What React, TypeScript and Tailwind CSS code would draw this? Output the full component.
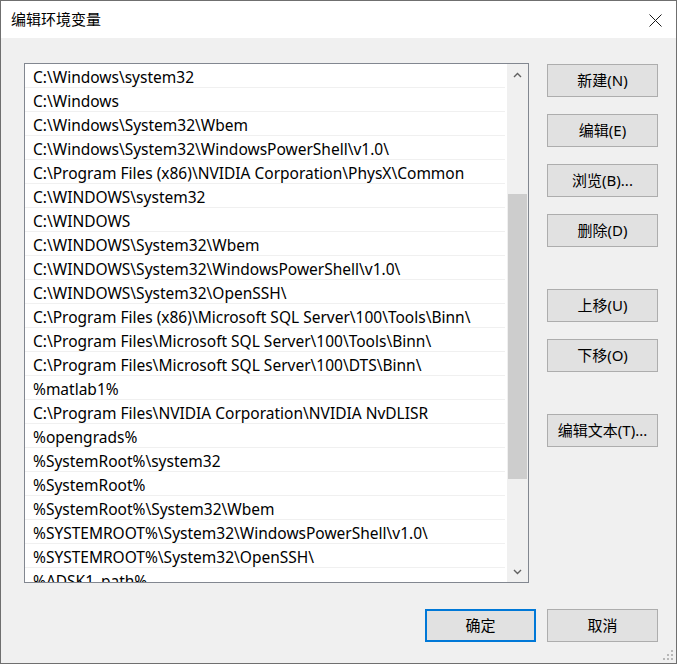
import React from 'react';

const paths = [
  'C:\\Windows\\system32',
  'C:\\Windows',
  'C:\\Windows\\System32\\Wbem',
  'C:\\Windows\\System32\\WindowsPowerShell\\v1.0\\',
  'C:\\Program Files (x86)\\NVIDIA Corporation\\PhysX\\Common',
  'C:\\WINDOWS\\system32',
  'C:\\WINDOWS',
  'C:\\WINDOWS\\System32\\Wbem',
  'C:\\WINDOWS\\System32\\WindowsPowerShell\\v1.0\\',
  'C:\\WINDOWS\\System32\\OpenSSH\\',
  'C:\\Program Files (x86)\\Microsoft SQL Server\\100\\Tools\\Binn\\',
  'C:\\Program Files\\Microsoft SQL Server\\100\\Tools\\Binn\\',
  'C:\\Program Files\\Microsoft SQL Server\\100\\DTS\\Binn\\',
  '%matlab1%',
  'C:\\Program Files\\NVIDIA Corporation\\NVIDIA NvDLISR',
  '%opengrads%',
  '%SystemRoot%\\system32',
  '%SystemRoot%',
  '%SystemRoot%\\System32\\Wbem',
  '%SYSTEMROOT%\\System32\\WindowsPowerShell\\v1.0\\',
  '%SYSTEMROOT%\\System32\\OpenSSH\\',
  '%ADSK1_path%',
];

const font = { fontFamily: '"Noto Sans", "Noto Sans CJK SC", sans-serif' };

function WinButton({ label, primary = false }: { label: string; primary?: boolean }) {
  return (
    <button
      className={
        'w-[111px] h-[33px] flex items-center justify-center bg-[#e1e1e1] text-[15px] text-black ' +
        (primary ? 'border-2 border-[#0078d7]' : 'border border-[#adadad]')
      }
    >
      {label}
    </button>
  );
}

export default function App() {
  return (
    <div
      className="relative w-[677px] h-[664px] flex flex-col border border-[#6f6f6f] bg-[#f0f0f0] overflow-hidden"
      style={font}
    >
      {/* Title bar */}
      <div className="h-[37px] bg-white flex items-center justify-between pl-[10px] pr-[14px]">
        <span className="text-[15px] text-black" style={{ fontFamily: '"Noto Sans CJK SC", sans-serif' }}>
          编辑环境变量
        </span>
        <svg width="13" height="13" viewBox="0 0 13 13" className="mt-[1px]">
          <path d="M0.5 0.5 L12.5 12.5 M12.5 0.5 L0.5 12.5" stroke="#1a1a1a" strokeWidth="1" fill="none" />
        </svg>
      </div>

      {/* Body */}
      <div className="flex-1 flex flex-col pl-[23px] pr-[18px] pt-[25px]">
        <div className="flex gap-[18px]">
          {/* List box */}
          <div className="w-[505px] h-[520px] border border-[#828790] bg-white flex overflow-hidden">
            <div className="flex-1 flex flex-col pr-[2px] overflow-hidden">
              {paths.map(p => (
                <div
                  key={p}
                  className="h-[24px] shrink-0 border-b border-[#f0f0f0] pl-[8px] pt-[4px] flex items-center text-[15.5px] text-black whitespace-nowrap leading-none"
                >
                  {p}
                </div>
              ))}
            </div>
            {/* Scrollbar */}
            <div className="w-[21px] bg-[#f0f0f0] flex flex-col">
              <div className="h-[21px] flex items-center justify-center">
                <svg width="9" height="6" viewBox="0 0 9 6">
                  <path d="M1 5 L4.5 1.5 L8 5" stroke="#606060" strokeWidth="1.4" fill="none" />
                </svg>
              </div>
              <div className="flex-1 px-[1px] pt-[109px]">
                <div className="h-[285px] bg-[#cdcdcd]" />
              </div>
              <div className="h-[21px] flex items-center justify-center">
                <svg width="9" height="6" viewBox="0 0 9 6">
                  <path d="M1 1 L4.5 4.5 L8 1" stroke="#606060" strokeWidth="1.4" fill="none" />
                </svg>
              </div>
            </div>
          </div>

          {/* Side buttons */}
          <div className="flex flex-col pt-[1px]">
            <div className="flex flex-col gap-[17px]">
              <WinButton label="新建(N)" />
              <WinButton label="编辑(E)" />
              <WinButton label="浏览(B)..." />
              <WinButton label="删除(D)" />
            </div>
            <div className="flex flex-col gap-[17px] mt-[42px]">
              <WinButton label="上移(U)" />
              <WinButton label="下移(O)" />
            </div>
            <div className="mt-[42px]">
              <WinButton label="编辑文本(T)..." />
            </div>
          </div>
        </div>

        {/* Footer */}
        <div className="flex justify-end gap-[11px] mt-[26px]">
          <WinButton label="确定" primary />
          <WinButton label="取消" />
        </div>
      </div>

      {/* Resize grip */}
      <svg width="11" height="11" viewBox="0 0 11 11" className="absolute right-[2px] bottom-[2px]">
        {[
          [8, 0],
          [4, 4],
          [8, 4],
          [0, 8],
          [4, 8],
          [8, 8],
        ].map(([x, y], i) => (
          <rect key={i} x={x} y={y} width="2" height="2" fill="#b8b8b8" />
        ))}
      </svg>
    </div>
  );
}
